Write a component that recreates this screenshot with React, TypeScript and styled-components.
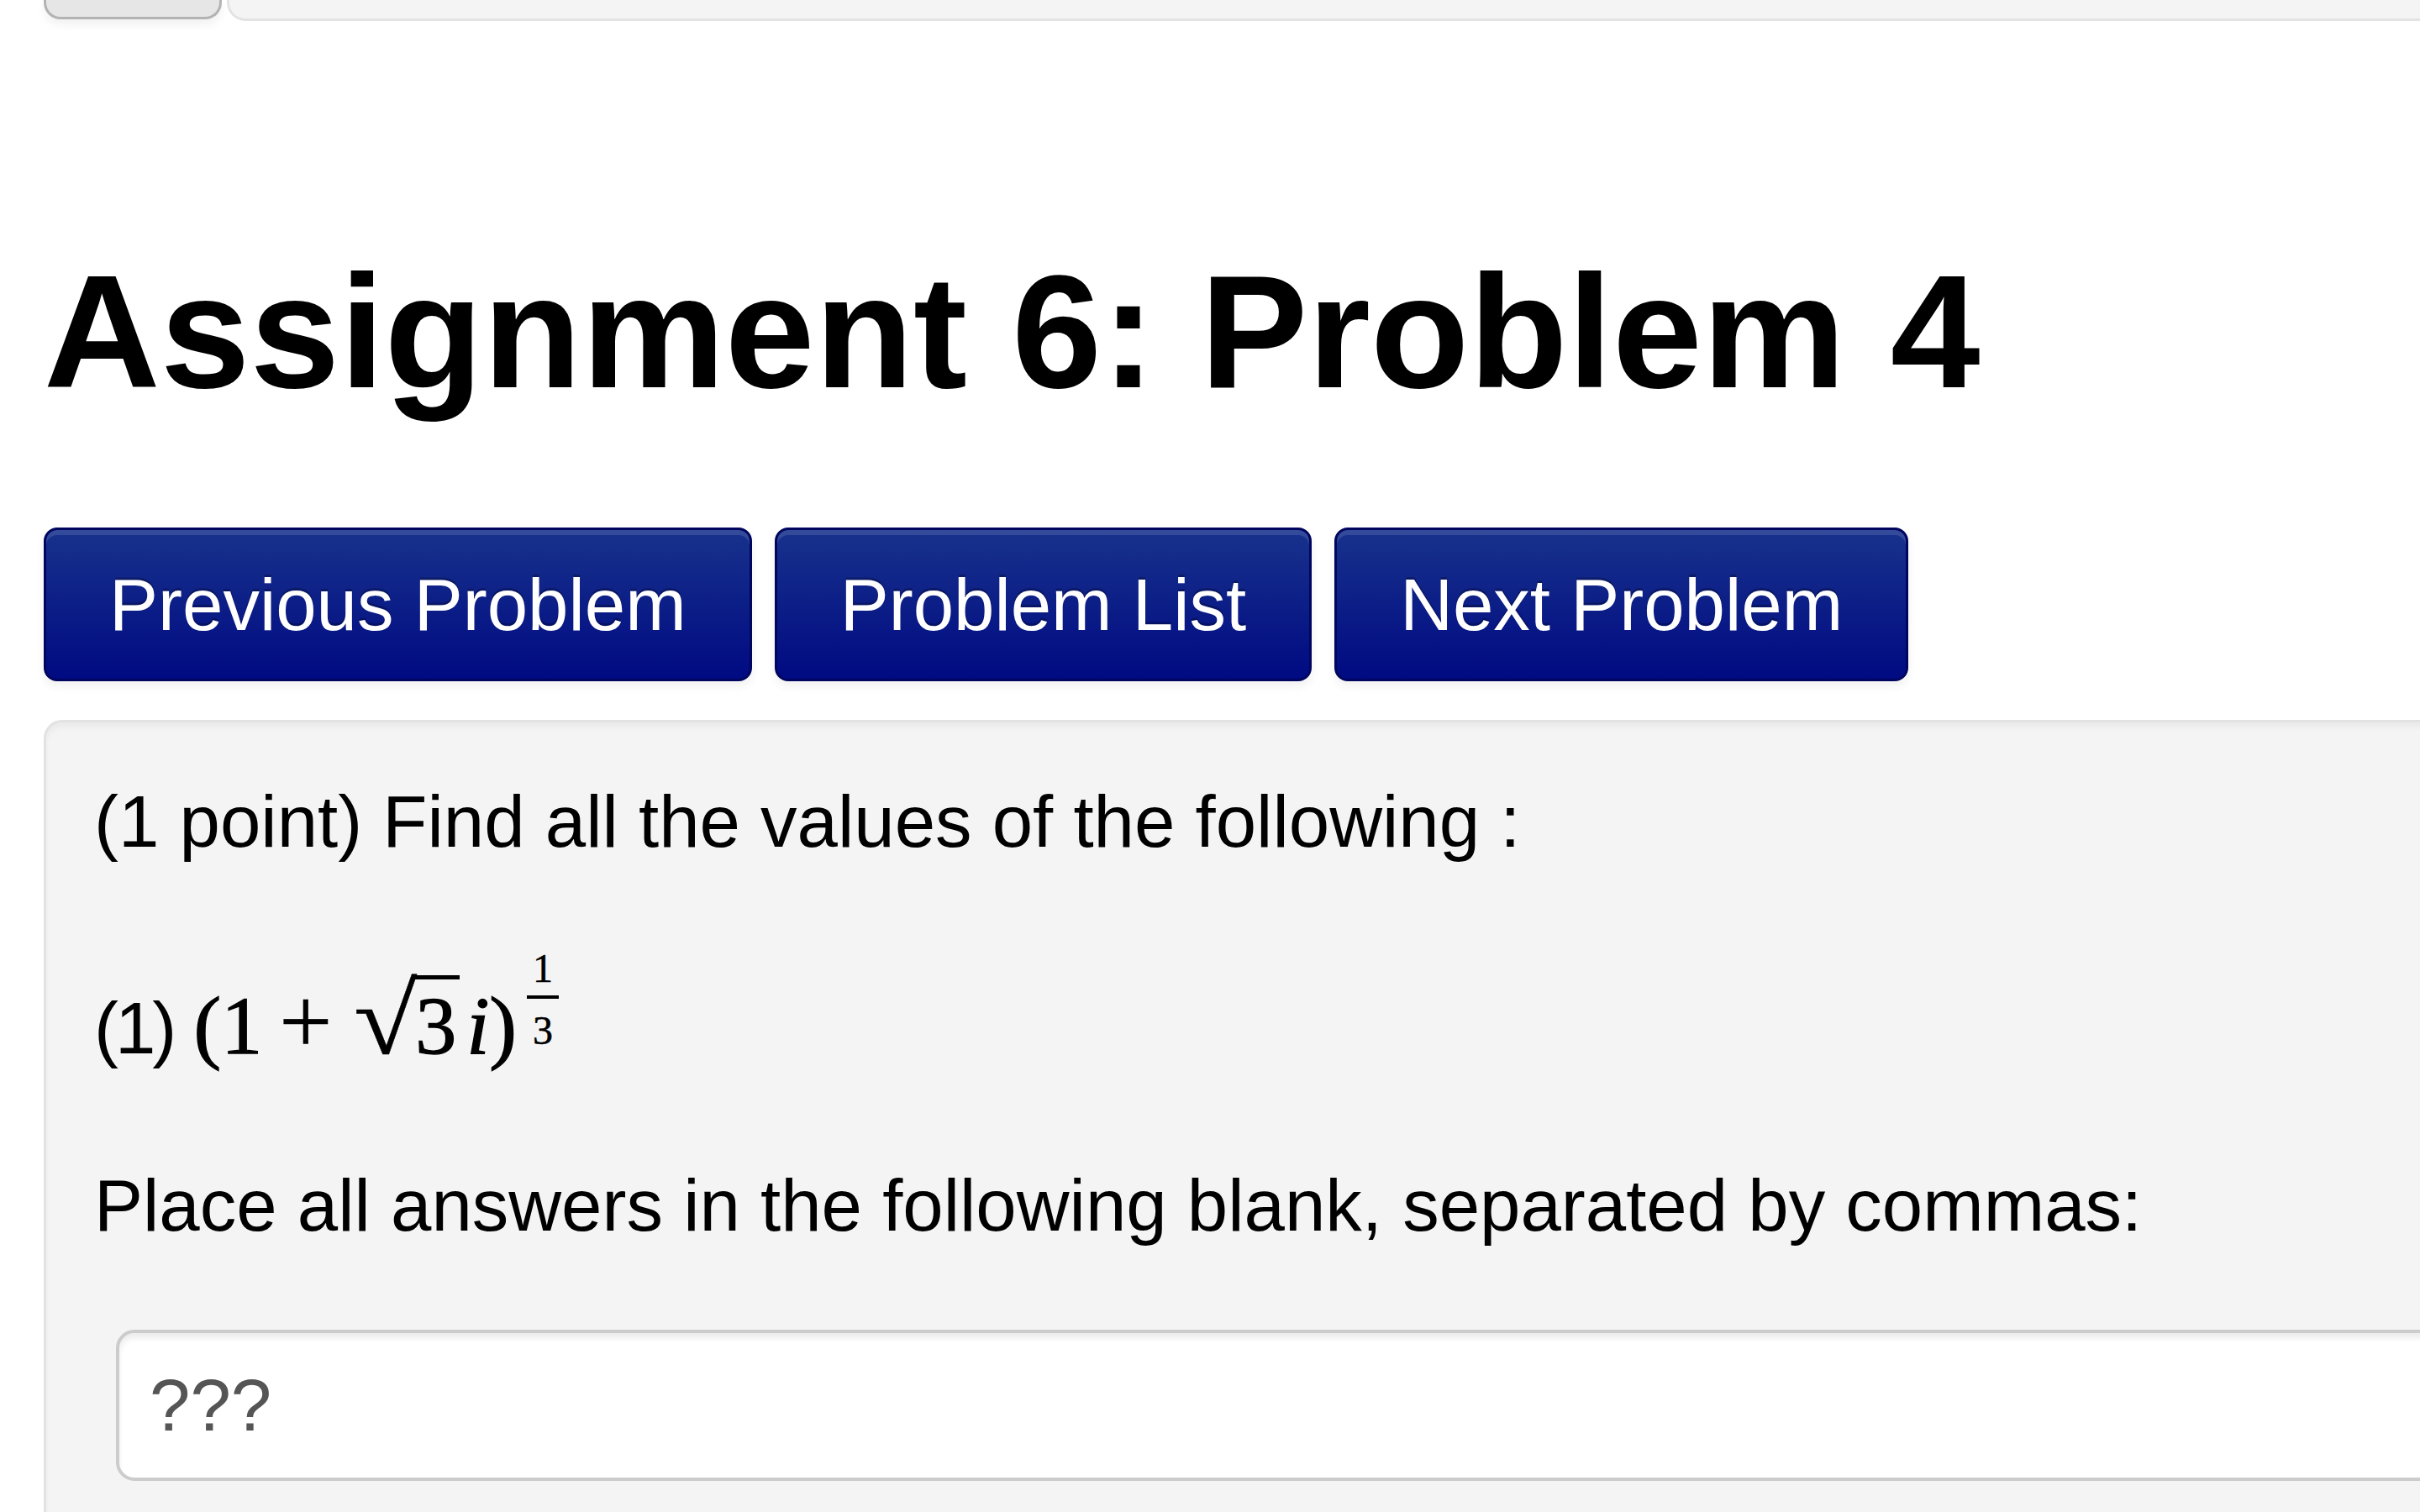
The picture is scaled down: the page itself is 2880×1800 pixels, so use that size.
import styled, { createGlobalStyle } from "styled-components";

const GlobalStyle = createGlobalStyle`
  html, body {
    margin: 0;
    padding: 0;
    overflow: hidden;
    background: #ffffff;
  }
  body {
    font-family: "Liberation Sans", Arial, Helvetica, sans-serif;
    color: #000;
  }
`;

export default function App() {
  return (
    <>
      <GlobalStyle />
      <Page>
        <TopBar>
          <TopButton />
          <TopStrip />
        </TopBar>

        <Title>Assignment 6: Problem 4</Title>

        <NavRow>
          <NavButton>Previous Problem</NavButton>
          <NavButton>Problem List</NavButton>
          <NavButton>Next Problem</NavButton>
        </NavRow>

        <ProblemWell>
          <Line>(1 point) Find all the values of the following :</Line>
          <MathLine>
            <PartLabel>(1)</PartLabel>{" "}
            <MathExpr>
              <MathSym>(</MathSym>
              <MathSym>1</MathSym>
              <MathOp>+</MathOp>
              <Radical>√</Radical>
              <Radicand>3</Radicand>
              <MathVar>i</MathVar>
              <MathSym>)</MathSym>
              <Fraction>
                <FracPart>1</FracPart>
                <FracBar />
                <FracPart $under>3</FracPart>
              </Fraction>
            </MathExpr>
          </MathLine>
          <Line $gap>
            Place all answers in the following blank, separated by commas:
          </Line>
          <AnswerBox type="text" defaultValue="???" readOnly />
        </ProblemWell>
      </Page>
    </>
  );
}

const Page = styled.main`
  padding-left: 52px;
  width: 3200px;
`;

const TopBar = styled.div`
  display: flex;
  align-items: flex-start;
  gap: 6px;
`;

const TopButton = styled.div`
  width: 212px;
  height: 23px;
  box-sizing: border-box;
  background: #e6e6e6;
  border: 3px solid #b3b3b3;
  border-top: none;
  border-radius: 0 0 20px 20px;
  box-shadow: 0 6px 12px rgba(0, 0, 0, 0.06);
`;

const TopStrip = styled.div`
  flex: 1;
  height: 25px;
  box-sizing: border-box;
  background: #f4f4f4;
  border: 3px solid #e3e3e3;
  border-top: none;
  border-radius: 0 0 0 22px;
`;

const Title = styled.h2`
  margin: 248px 0 0;
  font-size: 192px;
  line-height: 243px;
  font-weight: bold;
  color: #000;
`;

const NavRow = styled.div`
  display: flex;
  gap: 27px;
  margin-top: 112px;
`;

const NavButton = styled.button`
  font-family: "Liberation Sans", Arial, Helvetica, sans-serif;
  font-size: 87px;
  line-height: 119px;
  padding: 29px 75px;
  border: 3px solid #00065e;
  border-radius: 16px;
  color: #ffffff;
  text-shadow: 0 -3px 0 rgba(0, 0, 0, 0.25);
  background: linear-gradient(to bottom, #18328c, #000a82);
  box-shadow: inset 0 6px 0 rgba(255, 255, 255, 0.12),
    0 6px 12px rgba(0, 0, 0, 0.06);
  cursor: pointer;
`;

const ProblemWell = styled.section`
  margin-top: 46px;
  width: 3000px;
  box-sizing: border-box;
  padding: 57px 57px 120px;
  background: #f4f4f4;
  border: 3px solid #e2e2e2;
  border-radius: 22px;
  box-shadow: inset 0 6px 6px rgba(0, 0, 0, 0.04);
  font-size: 87px;
  line-height: 121px;
`;

const Line = styled.div<{ $gap?: boolean }>`
  margin-top: ${(p) => (p.$gap ? "120px" : "0")};
`;

/* the raised fraction grows the line box, so the top margin is pulled in */
const MathLine = styled.div`
  margin-top: 95px;
  height: 121px;
  white-space: nowrap;
`;

const PartLabel = styled.span`
  letter-spacing: -4px;
`;

const MathExpr = styled.span`
  font-family: "Liberation Serif", "Times New Roman", serif;
  font-size: 98px;
  line-height: 0;
  -webkit-text-stroke: 1.3px #000;
`;

const MathSym = styled.span``;

const MathOp = styled.span`
  font-size: 112px;
  margin: 0 26px 0 20px;
  -webkit-text-stroke: 0.6px #000;
`;

const Radical = styled.span`
  display: inline-block;
  line-height: 100px;
  transform: scale(1.4, 1.22);
  transform-origin: left calc(100% - 17px);
  margin-right: 19px;
  -webkit-text-stroke: 0.4px #000;
`;

const Radicand = styled.span`
  display: inline-block;
  border-top: 5px solid #000;
  line-height: 110px;
  padding-right: 4px;
`;

const MathVar = styled.span`
  font-style: italic;
  margin: 0 0 0 8px;
`;

const Fraction = styled.span`
  display: inline-flex;
  flex-direction: column;
  align-items: center;
  vertical-align: 85px;
  margin-left: 12px;
  width: 38px;
  -webkit-text-stroke: 0.5px #000;
`;

const FracPart = styled.span<{ $under?: boolean }>`
  font-size: 48px;
  line-height: 40px;
  margin-top: ${(p) => (p.$under ? "18px" : "0")};
`;

const FracBar = styled.span`
  display: block;
  width: 38px;
  height: 4px;
  margin-top: 12px;
  background: #000;
`;

const AnswerBox = styled.input`
  display: block;
  margin-top: 88px;
  margin-left: 26px;
  width: 2900px;
  height: 180px;
  box-sizing: border-box;
  padding: 0 36px;
  font-family: "Liberation Sans", Arial, Helvetica, sans-serif;
  font-size: 87px;
  color: #555555;
  background: #ffffff;
  border: 4px solid #cccccc;
  border-radius: 22px;
  box-shadow: inset 0 6px 6px rgba(0, 0, 0, 0.075);
  outline: none;
`;
